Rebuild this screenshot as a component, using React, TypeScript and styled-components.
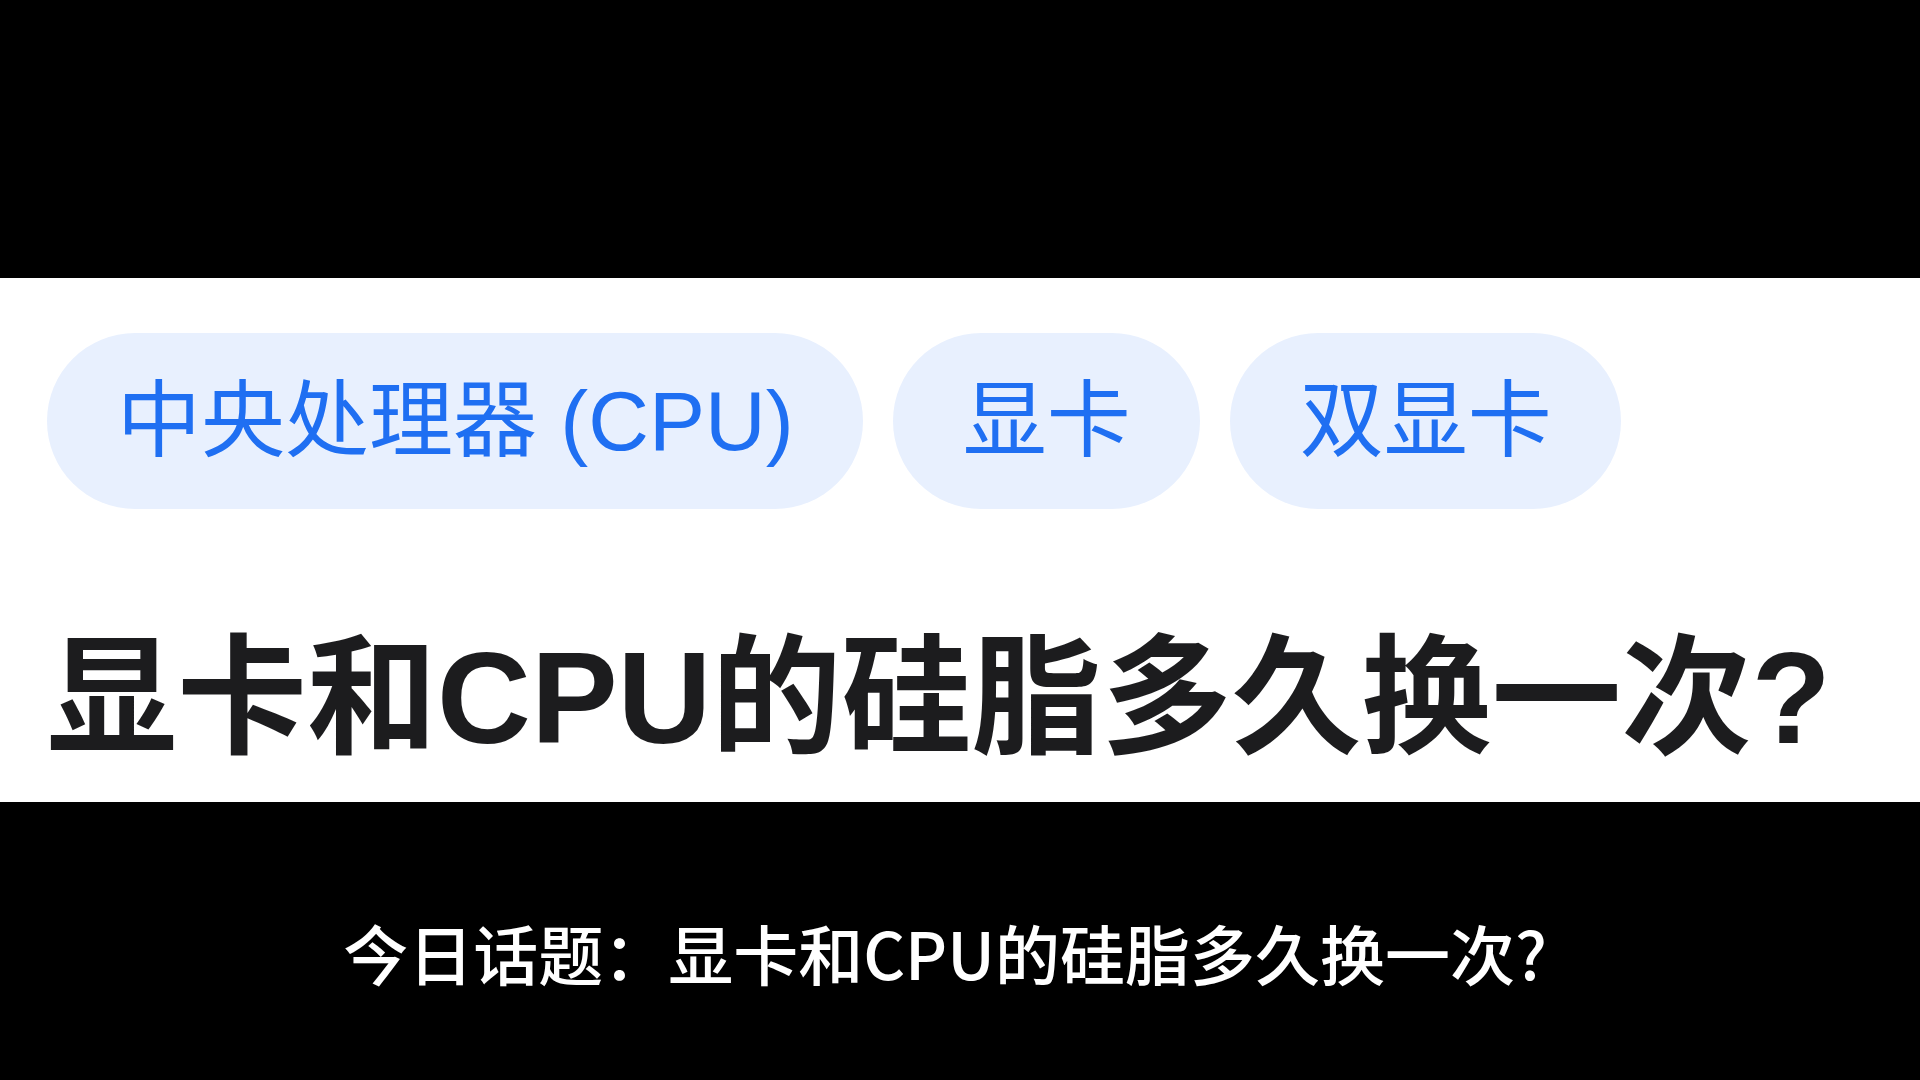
import React from "react";
import styled, { createGlobalStyle } from "styled-components";

const Global = createGlobalStyle`
  html, body { margin: 0; padding: 0; background: #000; }
  #root { width: 1920px; height: 1080px; }
`;

const Page = styled.div`
  width: 1920px;
  height: 1080px;
  display: flex;
  flex-direction: column;
  background: #000;
  overflow: hidden;
`;

const TopBand = styled.div`
  height: 278px;
  flex: none;
  background: #000;
`;

const Card = styled.section`
  height: 524px;
  flex: none;
  box-sizing: border-box;
  background: #fff;
  padding: 55px 0 0 47px;
  display: flex;
  flex-direction: column;
`;

const TagRow = styled.div`
  display: flex;
  gap: 30px;
`;

const Tag = styled.span`
  height: 176px;
  box-sizing: border-box;
  padding: 0 69px 0 70px;
  border-radius: 88px;
  background: #e8f0fe;
  color: #1f6ff2;
  font-family: "Liberation Sans", "Noto Sans CJK SC", sans-serif;
  font-size: 84px;
  line-height: 176px;
  white-space: nowrap;
`;

const Title = styled.h1`
  margin: 114px 0 0 0;
  color: #1c1c1e;
  font-family: "Liberation Sans", "Noto Sans CJK SC", sans-serif;
  font-weight: 700;
  font-size: 130px;
  line-height: 150px;
  white-space: nowrap;
`;

const BottomBand = styled.div`
  flex: 1;
  display: flex;
  align-items: center;
  justify-content: center;
  padding: 22px 30px 0 0;
  background: #000;
`;

const Subtitle = styled.p`
  margin: 0;
  color: #fff;
  font-family: "Noto Sans CJK SC", sans-serif;
  font-weight: 500;
  font-size: 65px;
  line-height: 1;
  white-space: nowrap;
`;

const tags = ["中央处理器 (CPU)", "显卡", "双显卡"];

export default function App() {
  return (
    <>
      <Global />
      <Page>
        <TopBand />
        <Card>
          <TagRow>
            {tags.map((t) => (
              <Tag key={t}>{t}</Tag>
            ))}
          </TagRow>
          <Title>显卡和CPU的硅脂多久换一次?</Title>
        </Card>
        <BottomBand>
          <Subtitle>今日话题：显卡和CPU的硅脂多久换一次?</Subtitle>
        </BottomBand>
      </Page>
    </>
  );
}
